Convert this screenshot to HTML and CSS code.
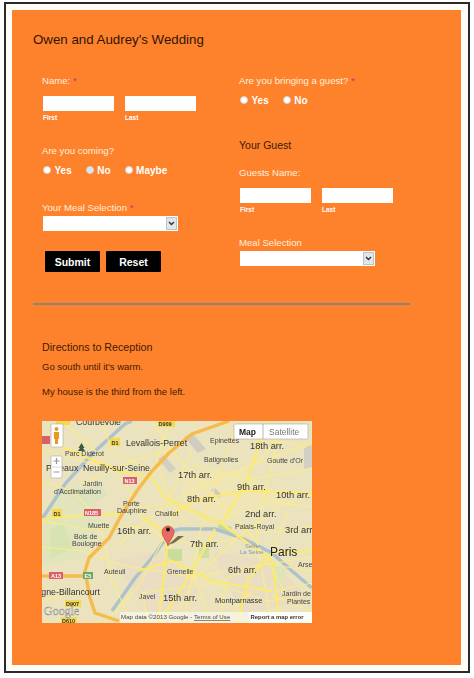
FILE: index.html
```html
<!DOCTYPE html>
<html lang="en">
<head>
    <meta charset="UTF-8">
    <meta name="viewport" content="width=device-width, initial-scale=1.0">
    <title>Owen and Audrey's Wedding</title>
    <link rel="stylesheet" href="styles.css">
</head>
<body>

<div class="frame">
    <div class="page">
        <h1>Owen and Audrey's Wedding</h1>

        <form class="columns">
            <div class="col">
                <label class="label name-label">Name: <span class="req">*</span></label>
                <div class="name-row">
                    <div class="name-part"><input type="text"><span class="sub">First</span></div>
                    <div class="name-part"><input type="text"><span class="sub">Last</span></div>
                </div>

                <label class="label coming-label">Are you coming?</label>
                <div class="radios">
                    <label class="radio"><input type="radio" name="coming">Yes</label>
                    <label class="radio"><input type="radio" name="coming" class="hover">No</label>
                    <label class="radio"><input type="radio" name="coming">Maybe</label>
                </div>

                <label class="label meal-label">Your Meal Selection <span class="req">*</span></label>
                <div class="select-box">
                    <select></select>
                    <span class="select-btn"><svg width="7" height="5" viewBox="0 0 7 5"><path d="M1 1l2.500 2.500L6 1" fill="none" stroke="#333" stroke-width="1.400"/></svg></span>
                </div>

                <div class="buttons">
                    <button type="submit" class="btn">Submit</button>
                    <button type="reset" class="btn">Reset</button>
                </div>
            </div>

            <div class="col">
                <label class="label name-label">Are you bringing a guest? <span class="req">*</span></label>
                <div class="radios">
                    <label class="radio"><input type="radio" name="guest">Yes</label>
                    <label class="radio"><input type="radio" name="guest">No</label>
                </div>

                <h2 class="guest-title">Your Guest</h2>

                <label class="label guests-label">Guests Name:</label>
                <div class="name-row">
                    <div class="name-part"><input type="text"><span class="sub">First</span></div>
                    <div class="name-part"><input type="text"><span class="sub">Last</span></div>
                </div>

                <label class="label guest-meal-label">Meal Selection</label>
                <div class="select-box">
                    <select></select>
                    <span class="select-btn"><svg width="7" height="5" viewBox="0 0 7 5"><path d="M1 1l2.500 2.500L6 1" fill="none" stroke="#333" stroke-width="1.400"/></svg></span>
                </div>
            </div>
        </form>

        <hr class="rule">

        <div class="directions">
            <h2>Directions to Reception</h2>
            <p>Go south until it's warm.</p>
            <p class="house">My house is the third from the left.</p>

            <svg class="map" width="270" height="202" viewBox="0 0 270 202">
                <rect width="270" height="202" fill="#ebe3bd"/>

                <!-- parks and blocks -->
                <path d="M0 100l22-36 24 4 14 24-16 44-44 8z" fill="#e2e5bb"/>
                <path d="M8 108l14-6 8 26-22 10z" fill="#d8e3b2"/>
                <path d="M30 68l30-4 6 10-26 14z" fill="#dee3bf"/>
                <path d="M123 128h17v12h-15z" fill="#c8dc9c"/>
                <path d="M157 127h10v10h-10z" fill="#cfdf9f"/>
                <path d="M200 157l13-1 1 17h-13z" fill="#c8dc9c"/>
                <path d="M177 103l13 3-1 6-14-3z" fill="#c5da98"/>
                <path d="M140 50l60 0 50 30-70 20-40-20z" fill="#efe5b6"/>
                <path d="M70 140l50-10 40 40-50 25z" fill="#e9dec2"/>
                <path d="M170 130l60 10 40 40-70 12z" fill="#e9dec2"/>
                <path d="M150 12l14 16-8 4-14-16z" fill="#cfcdbf"/>
                <path d="M122 34l12 14-6 4-12-14z" fill="#d2d0c0"/>
                <path d="M262 28l8-6v24l-8 2z" fill="#d2d0c4"/>
                <path d="M172 66l8 8-3 3-8-8z" fill="#cdccc2"/>
                <path d="M232 142l12 6-3 16-12-6z" fill="#dfe3b8"/>

                <!-- river -->
                <path d="M0 98L23 63 50 33 83 3 90 0" class="river"/>
                <path d="M70 190L93 157 113 133 127 113C132 109 136 108 140 108H173L200 117 230 132 250 150 270 167" class="river"/>

                <!-- small streets -->
                <path d="M0 28L40 40 90 52M20 0L60 36 84 64 100 96 130 128M110 0l20 30 40 44 40 40 36 62M196 0l-18 50-20 60-6 34 -10 58M240 0l-14 60-12 46 6 44 10 52M270 22l-70 26-52 22-40 26-34 30M0 100l46 8 50-2 60 20 60-14 54-6M0 126l40 4 40 14 70 12 120-20M60 110l10 50 20 42M130 202l22-44 44-42 40-30 34-12M178 202l6-44 36-16 50 8M100 172l70-10 56 18 44-6M150 44l58 14 62-10M40 62L90 40l38-12M62 202l34-36 34-64M128 0l-14 40 16 40 40 24M90 88l38-6 20 22M176 0l40 20 54 4M208 58l18 22 44 6M20 156l24-2 6-30M100 170l6 32M232 170l38-8M250 0l-30 36-30 20M150 30l-24 50M60 0l10 30 40 20M0 60l30 10 20 20M246 90l-16 40M150 150l20 52M210 170l-30 32M0 180l40-10M270 190l-40-16" class="street"/>
                <path d="M13 23L77 50 110 57 123 77 180 103M270 72L200 70 150 80 128 96M0 98L46 94 80 93M180 103L205 60 225 0M180 103L230 140 238 202M127 113L116 202M100 96L127 113M173 108L150 150 118 202M270 130L230 132 206 158 196 202M96 150L130 140 170 160 230 170" class="street street-wide"/>

                <!-- ring road -->
                <path d="M187 0L150 13 127 32 110 50 97 67 80 93 67 117 47 137 43 150 48 177 53 192 77 200" class="ring"/>
                <path d="M0 155H44" class="ring"/>

                <!-- road shields -->
                <rect x="14" y="0" width="14" height="4" class="shield-y"/>
                <rect x="116" y="0" width="17" height="6" class="shield-y"/>
                <text x="116.500" y="5" class="shield-text">D909</text>
                <rect x="0" y="15" width="8" height="8" class="shield-r"/>
                <rect x="68" y="17" width="10" height="8" class="shield-y"/>
                <text x="69.500" y="23.500" class="shield-text">D1</text>
                <rect x="81" y="56" width="14" height="7" class="shield-r"/>
                <text x="82.500" y="62" class="shield-text shield-text-w">N13</text>
                <rect x="10" y="88" width="10" height="8" class="shield-y"/>
                <text x="11.500" y="94.500" class="shield-text">D1</text>
                <rect x="42" y="88" width="17" height="7" class="shield-r"/>
                <text x="43" y="94" class="shield-text shield-text-w">N185</text>
                <rect x="7" y="151" width="14" height="7" class="shield-r"/>
                <text x="9" y="157" class="shield-text shield-text-w">A13</text>
                <rect x="41" y="151" width="10" height="7" class="shield-g"/>
                <text x="42.500" y="157" class="shield-text shield-text-w">E5</text>
                <rect x="23" y="179" width="16" height="7" class="shield-y"/>
                <text x="24" y="185" class="shield-text">D907</text>
                <rect x="19" y="196" width="16" height="6" class="shield-y"/>
                <text x="20" y="201.500" class="shield-text">D610</text>

                <!-- place names -->
                <text x="34" y="4" class="place-md2">Courbevoie</text>
                <text x="84" y="25" class="place-md2">Levallois-Perret</text>
                <text x="23" y="35" class="place-sm">Parc Diderot</text>
                <path d="M39.500 22l-3 5h1.500l-2 3h7l-2-3h1.500z" fill="#3d5a3a"/>
                <text x="4" y="50" class="place-md2">Puteaux</text>
                <text x="41" y="50" class="place-md2">Neuilly-sur-Seine</text>
                <text x="41" y="65" class="place-sm">Jardin</text>
                <text x="12" y="73" class="place-sm">d'Acclimatation</text>
                <text x="81" y="85" class="place-sm">Porte</text>
                <text x="75" y="92" class="place-sm">Dauphine</text>
                <text x="113" y="95" class="place-sm">Chaillot</text>
                <text x="168" y="22" class="place-sm">Epinettes</text>
                <text x="208" y="28" class="place-lg">18th arr.</text>
                <text x="162" y="41" class="place-sm">Batignolles</text>
                <text x="225" y="42" class="place-sm">Goutte d'Or</text>
                <text x="136" y="57" class="place-lg">17th arr.</text>
                <text x="195" y="69" class="place-lg">9th arr.</text>
                <text x="234" y="77" class="place-lg">10th arr.</text>
                <text x="145" y="81" class="place-lg">8th arr.</text>
                <text x="203" y="96" class="place-lg">2nd arr.</text>
                <text x="46" y="107" class="place-sm">Muette</text>
                <text x="32" y="118" class="place-sm">Bois de</text>
                <text x="30" y="125" class="place-sm">Boulogne</text>
                <text x="75" y="113" class="place-lg">16th arr.</text>
                <text x="62" y="153" class="place-sm">Auteuil</text>
                <text x="125" y="153" class="place-sm">Grenelle</text>
                <text x="58" y="174" class="place-md2 end">Boulogne-Billancourt</text>
                <text x="97" y="178" class="place-sm">Javel</text>
                <text x="121" y="180" class="place-lg">15th arr.</text>
                <text x="193" y="108" class="place-sm">Palais-Royal</text>
                <text x="243" y="112" class="place-lg">3rd arr.</text>
                <text x="148" y="126" class="place-lg">7th arr.</text>
                <text x="228" y="135" class="place-xl">Paris</text>
                <text x="203" y="127" class="place-water">Seine</text>
                <text x="198" y="133" class="place-water">La Seine</text>
                <text x="256" y="146" class="place-sm">Arsenal</text>
                <text x="186" y="152" class="place-lg">6th arr.</text>
                <text x="240" y="175" class="place-sm">Jardin de</text>
                <text x="245" y="183" class="place-sm">Plantes</text>
                <text x="173" y="182" class="place-md">Montparnasse</text>

                <!-- pin -->
                <path d="M126 124L136 115 142 115 132 122z" fill="#5f5128" opacity=".8"/>
                <path d="M126 125c-1-5-6-9-6-14a6 6 0 0 1 12 0c0 5-5 9-6 14z" fill="#ea6a62" stroke="#b23b33" stroke-width=".6"/>
                <circle cx="126" cy="108.500" r="2" fill="#111"/>

                <!-- google logo -->
                <text x="2" y="194" class="logo">Google</text>

                <!-- attribution -->
                <rect x="78" y="191" width="129" height="11" fill="#fff" opacity=".55"/>
                <rect x="207" y="191" width="63" height="11" fill="#fff" opacity=".9"/>
                <text x="79" y="198" class="attrib">Map data ©2013 Google - <tspan class="attrib-link">Terms of Use</tspan></text>
                <text x="208.500" y="198" class="attrib attrib-report">Report a map error</text>

                <!-- pegman -->
                <rect x="9" y="3" width="12" height="23" rx="1" class="control"/>
                <circle cx="14.500" cy="8" r="2" fill="#e89a20"/>
                <path d="M12 11h5v7h-1v5h-3v-5h-1z" fill="#e89a20"/>

                <!-- zoom -->
                <rect x="9" y="35" width="11" height="22" rx="1" class="control"/>
                <path d="M10 46h9" stroke="#ccc" stroke-width=".7"/>
                <path d="M14.500 37v6M11.500 40h6M11.500 51h6" stroke="#999" stroke-width="1.200" fill="none"/>

                <!-- map type -->
                <rect x="192" y="3" width="74" height="15" rx="1" class="control"/>
                <path d="M221 3v15" stroke="#999" stroke-width=".7"/>
                <text x="197" y="14" class="map-type map-type-on">Map</text>
                <text x="227" y="14" class="map-type">Satellite</text>
            </svg>
        </div>
    </div>
</div>

</body>
</html>
```

FILE: styles.css
```css
* {
    margin: 0;
    padding: 0;
    box-sizing: border-box;
}

body {
    font-family: "Liberation Sans", Arial, sans-serif;
    background-color: #fff;
    color: #fff;
}

.frame {
    width: 466px;
    height: 671px;
    margin: 2px 0 0 4px;
    padding: 6px 7px 6px 6px;
    border: 2px solid #2a2a2a;
    background-color: #fffdf8;
}

.page {
    height: 100%;
    padding: 21px 20px 0 21px;
    background-color: #fe822b;
}

h1 {
    font-size: 13.3px;
    font-weight: normal;
    line-height: 18px;
    color: #2f1405;
}

.columns {
    display: flex;
    margin-top: 26px;
    padding-left: 9px;
}

.col {
    width: 197px;
}

.label {
    display: block;
    font-size: 9.6px;
    line-height: 12px;
    color: #ffeedd;
}

.req {
    color: #b0309a;
}

.name-row {
    display: flex;
    gap: 11px;
    margin-top: 9px;
    padding-left: 1px;
}

.name-part {
    width: 71px;
}

.name-part input {
    display: block;
    width: 71px;
    height: 15px;
    border: none;
    background-color: #fff;
}

.sub {
    display: block;
    margin-top: 2px;
    font-size: 6.5px;
    font-weight: bold;
    line-height: 9px;
}

.coming-label {
    margin-top: 23px;
}

.radios {
    display: flex;
    gap: 14px;
    margin-top: 8px;
    padding-left: 1px;
}

.radio {
    display: flex;
    align-items: center;
    gap: 3.5px;
    font-size: 10px;
    font-weight: bold;
    line-height: 12px;
}

.radio input {
    appearance: none;
    width: 8px;
    height: 8px;
    margin-top: -2px;
    border: 1px solid #d8d2ca;
    border-radius: 50%;
    background-color: #fff;
}

.radio input.hover {
    background-color: #dbe6f2;
}

.meal-label {
    margin-top: 25px;
}

.select-box {
    display: flex;
    width: 135px;
    height: 15px;
    margin-top: 2px;
    margin-left: 1px;
    background-color: #fff;
}

.select-box select {
    flex: 1;
    min-width: 0;
    appearance: none;
    border: none;
    background-color: #fff;
}

.select-btn {
    display: flex;
    align-items: center;
    justify-content: center;
    width: 11px;
    margin: 1px;
    border: 1px solid #b9c4cf;
    background-color: #dfe6ec;
}

.buttons {
    display: flex;
    gap: 6px;
    margin-top: 20px;
    padding-left: 3px;
}

.btn {
    width: 55px;
    height: 21px;
    border: none;
    border-radius: 1px;
    background-color: #000;
    color: #fff;
    font-family: inherit;
    font-size: 10.5px;
    font-weight: bold;
}

.guest-title {
    margin-top: 31px;
    font-size: 10.5px;
    font-weight: normal;
    line-height: 14px;
    color: #3a1a06;
}

.guests-label {
    margin-top: 15px;
}

.guest-meal-label {
    margin-top: 23px;
}

.rule {
    width: 377px;
    height: 2px;
    margin-top: 31px;
    border: none;
    background-color: #8c8478;
}

.directions {
    margin-top: 35px;
    padding-left: 9px;
    color: #3f1a04;
}

.directions h2 {
    font-size: 10.7px;
    font-weight: normal;
    line-height: 14px;
}

.directions p {
    margin-top: 7px;
    font-size: 9.5px;
    line-height: 12px;
}

.directions .house {
    margin-top: 13px;
}

.map {
    display: block;
    margin-top: 23px;
    filter: blur(.25px);
}

.river {
    fill: none;
    stroke: #aec2cc;
    stroke-width: 3.5;
}

.street {
    fill: none;
    stroke: #fbec8a;
    stroke-width: 1.1;
}

.street-wide {
    stroke: #fdea6c;
    stroke-width: 2.2;
}

.ring {
    fill: none;
    stroke: #f6bb4a;
    stroke-width: 3.4;
}

.shield-y {
    fill: #f5d84e;
}

.shield-r {
    fill: #d8606a;
}

.shield-g {
    fill: #6fa66c;
}

.shield-text {
    font-size: 5.5px;
    font-weight: bold;
    fill: #333;
}

.shield-text-w {
    fill: #fff;
}

.place-sm {
    font-size: 7px;
    fill: #444;
}

.place-md {
    font-size: 7.5px;
    fill: #333;
}

.place-md2 {
    font-size: 8.8px;
    fill: #333;
}

.place-lg {
    font-size: 9.3px;
    fill: #333;
}

.place-xl {
    font-size: 12px;
    fill: #222;
}

.end {
    text-anchor: end;
}

.place-water {
    font-size: 6px;
    fill: #7c97c4;
}

.logo {
    font-size: 12px;
    font-family: "Liberation Serif", serif;
    fill: #e4e4e4;
    stroke: #888;
    stroke-width: .4;
}

.attrib {
    font-size: 6.2px;
    fill: #444;
}

.attrib-link {
    text-decoration: underline;
}

.attrib-report {
    font-size: 5.9px;
    font-weight: bold;
    fill: #333;
}

.control {
    fill: #fff;
    stroke: #aaa;
    stroke-width: .6;
}

.map-type {
    font-size: 8.5px;
    fill: #777;
}

.map-type-on {
    font-weight: bold;
    fill: #222;
}
```
